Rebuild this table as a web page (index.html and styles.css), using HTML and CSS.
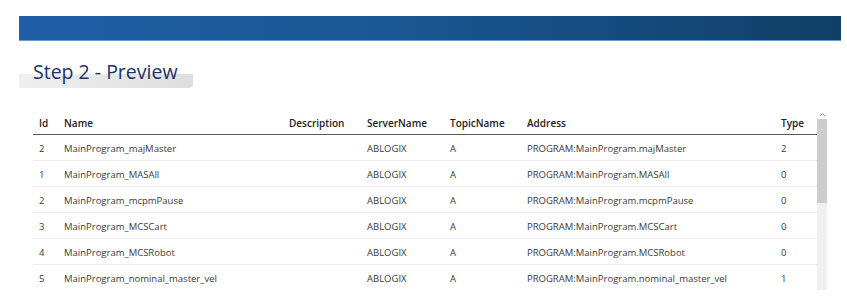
FILE: index.html
```html
<!DOCTYPE html>
<html lang="en">
<head>
<meta charset="utf-8">
<title>Step 2 - Preview</title>
<link rel="stylesheet" href="styles.css">
</head>
<body>
<div class="page">
  <div class="banner"></div>
  <h2 class="step-title">Step 2 - Preview</h2>
  <div class="grid-wrap">
    <div class="grid-viewport">
      <table class="grid">
        <colgroup>
          <col class="c-id"><col class="c-name"><col class="c-desc"><col class="c-server"><col class="c-topic"><col class="c-addr"><col class="c-type">
        </colgroup>
        <thead>
          <tr><th>Id</th><th>Name</th><th>Description</th><th>ServerName</th><th>TopicName</th><th>Address</th><th>Type</th></tr>
        </thead>
        <tbody>
          <tr><td>2</td><td>MainProgram_majMaster</td><td></td><td>ABLOGIX</td><td>A</td><td>PROGRAM:MainProgram.majMaster</td><td>2</td></tr>
          <tr><td>1</td><td>MainProgram_MASAll</td><td></td><td>ABLOGIX</td><td>A</td><td>PROGRAM:MainProgram.MASAll</td><td>0</td></tr>
          <tr><td>2</td><td>MainProgram_mcpmPause</td><td></td><td>ABLOGIX</td><td>A</td><td>PROGRAM:MainProgram.mcpmPause</td><td>0</td></tr>
          <tr><td>3</td><td>MainProgram_MCSCart</td><td></td><td>ABLOGIX</td><td>A</td><td>PROGRAM:MainProgram.MCSCart</td><td>0</td></tr>
          <tr><td>4</td><td>MainProgram_MCSRobot</td><td></td><td>ABLOGIX</td><td>A</td><td>PROGRAM:MainProgram.MCSRobot</td><td>0</td></tr>
          <tr class="last"><td>5</td><td>MainProgram_nominal_master_vel</td><td></td><td>ABLOGIX</td><td>A</td><td>PROGRAM:MainProgram.nominal_master_vel</td><td>1</td></tr>
        </tbody>
      </table>
    </div>
    <div class="vscroll">
      <div class="vscroll-up"><svg width="7" height="5" viewBox="0 0 7 5"><path d="M1 4 L3.5 1.5 L6 4" fill="none" stroke="#8a8a8a" stroke-width="1"/></svg></div>
      <div class="vscroll-thumb"></div>
      <div class="vscroll-track"></div>
    </div>
  </div>
</div>
</body>
</html>
```
FILE: styles.css
```css
html, body {
  margin: 0;
  padding: 0;
  background: #ffffff;
}
body {
  font-family: "Open Sans", "Noto Sans", sans-serif;
  color: #333;
}
.page {
  padding: 16px 6px 0 19px;
}
.banner {
  width: 822px;
  height: 24px;
  background: linear-gradient(to right, #1f5ea6 0%, #1b5794 45%, #0f3f66 100%);
  border-bottom: 1px solid #6d98c6;
}
.step-title {
  margin: 19px 0 0 0;
  width: 160px;
  padding: 0 0 4px 14px;
  font-size: 19.5px;
  line-height: 24px;
  font-weight: 400;
  color: #1d2f6c;
  background: linear-gradient(to right, #efefef, #dedede) no-repeat left bottom / 100% 14px;
  border-radius: 0 4px 4px 0;
}
.grid-wrap {
  margin: 21px 0 0 14px;
  display: flex;
  width: 794px;
  height: 181px;
}
.grid-viewport {
  width: 784px;
  height: 181px;
  overflow: hidden;
}
.grid {
  width: 784px;
  border-collapse: collapse;
  table-layout: fixed;
  font-size: 9.5px;
}
.c-id { width: 25px; }
.c-name { width: 225px; }
.c-desc { width: 78px; }
.c-server { width: 83px; }
.c-topic { width: 77px; }
.c-addr { width: 254px; }
.c-type { width: 42px; }
.grid th {
  height: 21px;
  padding: 0 0 4px 6px;
  text-align: left;
  vertical-align: bottom;
  font-size: 10px;
  font-weight: 600;
  color: #222;
  border-bottom: 1px solid #5a5a5a;
  white-space: nowrap;
}
.grid td {
  height: 23px;
  padding: 2px 0 0 6px;
  vertical-align: middle;
  border-bottom: 1px solid #ebebeb;
  white-space: nowrap;
  color: #3a3a3a;
}
.grid tr.last td {
  border-bottom: none;
}
.vscroll {
  width: 10px;
  display: flex;
  flex-direction: column;
}
.vscroll-up {
  height: 10px;
  display: flex;
  align-items: center;
  justify-content: center;
  background: #ffffff;
}
.vscroll-thumb {
  height: 84px;
  background: #cdcdcd;
}
.vscroll-track {
  flex: 1;
  background: #f0f0f0;
}
```
